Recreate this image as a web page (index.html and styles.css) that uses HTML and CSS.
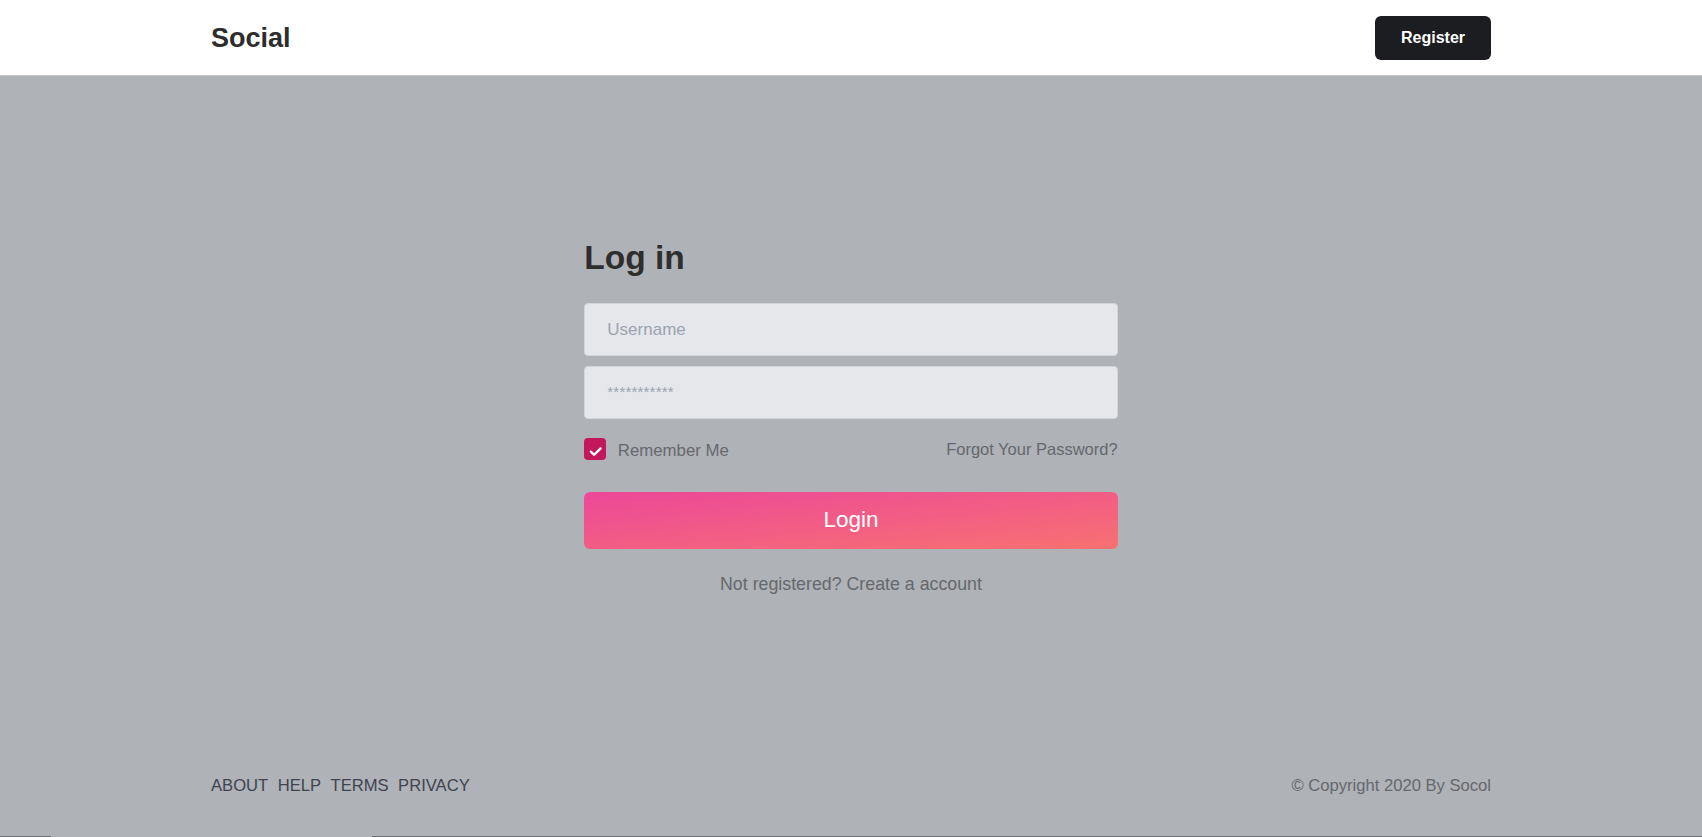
FILE: index.html
```html
<!DOCTYPE html>
<html lang="en">
<head>
<meta charset="utf-8">
<title>Social - Log in</title>
<link rel="stylesheet" href="styles.css">
</head>
<body>
<header class="topbar">
  <div class="container topbar-inner">
    <a class="brand" href="#">Social</a>
    <a class="btn-register" href="#">Register</a>
  </div>
</header>
<main class="main">
  <form class="login-form">
    <h1 class="title">Log in</h1>
    <input class="field" type="text" placeholder="Username">
    <input class="field field-pass" type="password" placeholder="***********">
    <div class="options">
      <label class="remember">
        <span class="check">
          <svg viewBox="0 0 22 22" width="22" height="22"><path d="M6.8 13.6 L10.2 16.8 L16.6 10.4" fill="none" stroke="#fff" stroke-width="2.3" stroke-linecap="round" stroke-linejoin="round"/></svg>
        </span>
        <span class="remember-text">Remember Me</span>
      </label>
      <a class="forgot" href="#">Forgot Your Password?</a>
    </div>
    <button class="btn-login" type="button">Login</button>
    <p class="signup"><a href="#">Not registered? Create a account</a></p>
  </form>
</main>
<footer class="footer">
  <div class="container footer-inner">
    <nav class="footer-links">
      <a href="#">ABOUT</a>
      <a href="#">HELP</a>
      <a href="#">TERMS</a>
      <a href="#">PRIVACY</a>
    </nav>
    <span class="copyright">© Copyright 2020 By Socol</span>
  </div>
</footer>
<div class="edge"><span class="edge-a"></span><span class="edge-gap"></span><span class="edge-b"></span></div>
</body>
</html>
```
FILE: styles.css
```css
* { box-sizing: border-box; }
html, body { margin: 0; padding: 0; }
body {
  background: #afb2b7;
  font-family: "Liberation Sans", Arial, sans-serif;
  color: #2e2e2e;
  min-height: 100vh;
  display: flex;
  flex-direction: column;
  overflow: hidden;
}
a { text-decoration: none; color: inherit; }
.container {
  width: 1280px;
  margin: 0 auto;
}
.topbar {
  background: #fff;
  height: 76px;
  border-bottom: 1px solid #c6c8cb;
}
.topbar-inner {
  height: 75px;
  display: flex;
  align-items: center;
  justify-content: space-between;
}
.brand {
  font-size: 27px;
  font-weight: 700;
  color: #2d2d2d;
  line-height: 32px;
}
.btn-register {
  width: 116px;
  height: 44px;
  border-radius: 6px;
  background: #1c1d21;
  color: #fff;
  font-weight: 700;
  font-size: 16px;
  display: flex;
  align-items: center;
  justify-content: center;
}
.main {
  flex: 1;
  padding-top: 161.5px;
}
.login-form {
  width: 533.33px;
  margin: 0 auto;
  display: flex;
  flex-direction: column;
}
.title {
  margin: 0 0 25.5px;
  font-size: 33.5px;
  line-height: 40px;
  font-weight: 700;
  color: #2e2e2e;
}
.field {
  height: 53px;
  border: 1px solid #d3d5d9;
  background: #e5e7eb;
  border-radius: 4px;
  padding: 0 22px;
  font-family: inherit;
  font-size: 17px;
  color: #333;
  outline: none;
}
.field::placeholder { color: #9ca3af; }
.field-pass { margin-top: 9.5px; }
.field-pass::placeholder { font-size: 15px; letter-spacing: 0.2px; }
.options {
  margin-top: 16px;
  display: flex;
  align-items: center;
  justify-content: space-between;
}
.remember {
  display: flex;
  align-items: center;
  height: 28px;
}
.check {
  width: 22px;
  height: 22px;
  border-radius: 4px;
  background: #c2185b;
  display: flex;
}
.remember-text {
  margin-left: 11.5px;
  padding-top: 4px;
  font-size: 16.8px;
  line-height: 24px;
  color: #66686c;
}
.forgot {
  font-size: 16.5px;
  line-height: 24px;
  color: #66686c;
}
.btn-login {
  margin-top: 29px;
  height: 57px;
  border: none;
  border-radius: 6px;
  background: linear-gradient(to bottom right, #ec4899, #f87171);
  color: #fff;
  font-family: inherit;
  font-size: 22.5px;
  cursor: pointer;
}
.signup {
  margin: 22.8px 0 0;
  text-align: center;
  font-size: 17.8px;
  line-height: 26px;
  color: #66686c;
}
.footer {
  padding-bottom: 38.5px;
}
.footer-inner {
  display: flex;
  justify-content: space-between;
  align-items: center;
  height: 24px;
}
.footer-links {
  display: flex;
  gap: 9.5px;
  font-size: 16.6px;
  line-height: 24px;
  color: #3e4350;
}
.copyright {
  font-size: 16.6px;
  line-height: 24px;
  color: #66686c;
}
.edge {
  height: 1px;
  display: flex;
}
.edge-a { width: 51px; background: #6e7074; }
.edge-gap { width: 321px; }
.edge-b { flex: 1; background: #6e7074; }
```
